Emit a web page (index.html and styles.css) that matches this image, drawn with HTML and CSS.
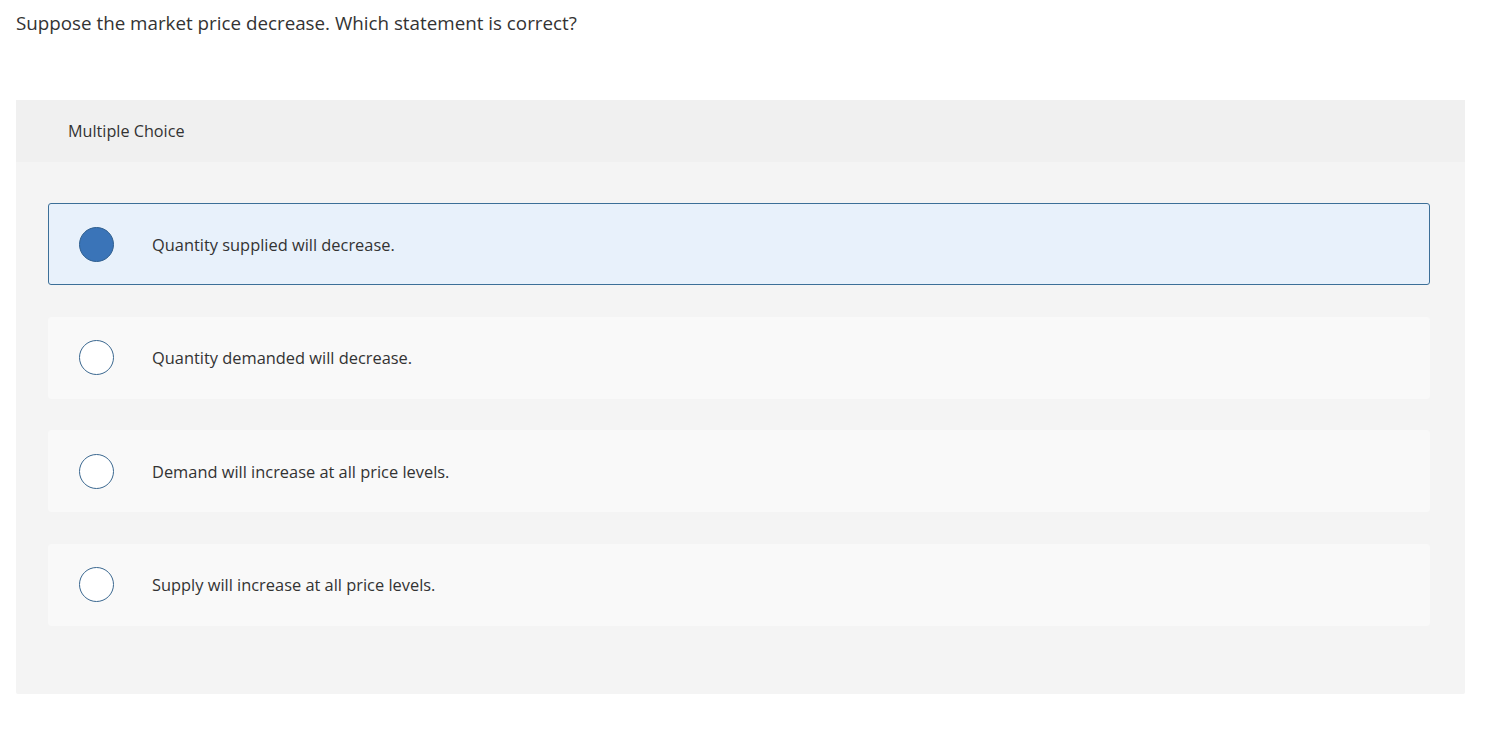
FILE: index.html
```html
<!DOCTYPE html>
<html>
<head>
<meta charset="utf-8">
<link rel="stylesheet" href="styles.css">
</head>
<body>
<p class="question">Suppose the market price decrease. Which statement is correct?</p>
<section class="panel">
  <div class="panel-head">Multiple Choice</div>
  <div class="panel-body">
    <div class="option selected"><span class="radio"></span><span class="label">Quantity supplied will decrease.</span></div>
    <div class="option"><span class="radio"></span><span class="label">Quantity demanded will decrease.</span></div>
    <div class="option"><span class="radio"></span><span class="label">Demand will increase at all price levels.</span></div>
    <div class="option"><span class="radio"></span><span class="label">Supply will increase at all price levels.</span></div>
  </div>
</section>
</body>
</html>
```
FILE: styles.css
```css
html, body { margin: 0; padding: 0; background: #fff; }
body {
  font-family: "Open Sans", "Liberation Sans", sans-serif;
  color: #333;
  padding: 0 40px 0 16px;
}
.question {
  margin: 0;
  padding-top: 10px;
  font-size: 18.8px;
  line-height: 26px;
  height: 90px;
  color: #333;
}
.panel {
  width: 1449px;
  background: #f4f4f4;
  border-radius: 2px;
}
.panel-head {
  background: #f0f0f0;
  height: 62px;
  display: flex;
  align-items: center;
  padding-left: 52px;
  font-size: 16.2px;
  color: #333;
}
.panel-body {
  padding: 41px 35px 68px 32px;
  display: flex;
  flex-direction: column;
  gap: 31.5px;
}
.option {
  height: 82px;
  background: #f9f9f9;
  border: 1px solid #f9f9f9;
  border-radius: 3px;
  display: flex;
  align-items: center;
  box-sizing: border-box;
  padding-left: 30px;
}
.option.selected {
  background: #e8f1fb;
  border-color: #3c6f98;
}
.radio {
  width: 33px;
  height: 33px;
  border: 1px solid #3b6890;
  border-radius: 50%;
  background: #fff;
  flex: none;
}
.selected .radio {
  background: #3a74b8;
  border-color: #2f5f8f;
}
.label {
  margin-left: 38px;
  font-size: 16.4px;
  color: #333;
}
```
